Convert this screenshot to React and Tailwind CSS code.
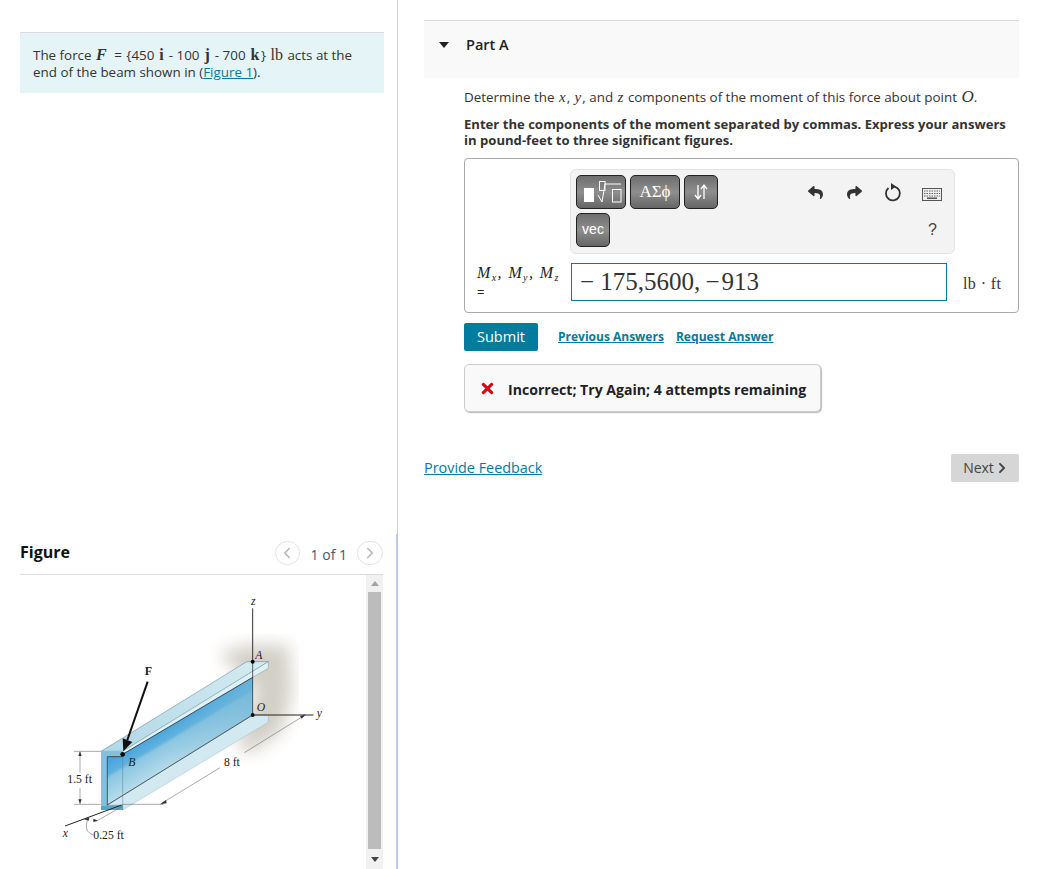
import { FaReply, FaShare, FaTimes, FaChevronRight } from "react-icons/fa";
import { ChevronLeft, ChevronRight } from "lucide-react";

const Serif = ({ children, className = "" }) => (
    <span className={"font-['Liberation_Serif',serif] " + className}>{children}</span>
);

const MathVar = ({ children }) => <Serif className="italic text-[15px] mx-[1px]">{children}</Serif>;

const Bold = ({ children }) => <Serif className="font-bold text-[16px] mx-[1.5px]">{children}</Serif>;

const ToolBtn = ({ children, className = "" }) => (
    <div className={"h-[34px] flex items-center justify-center rounded-[5px] border border-[#222] bg-gradient-to-b from-[#6e6e6e] via-[#8e8e8e] to-[#666] text-white " + className}>
        {children}
    </div>
);

const Beam = () => (
    <svg width="290" height="270" viewBox="0 0 870 810" className="block">
        <defs>
            <filter id="blur1"><feGaussianBlur stdDeviation="26" /></filter>
            <linearGradient id="web" gradientUnits="userSpaceOnUse" x1="350" y1="415" x2="403" y2="504">
                <stop offset="0" stopColor="#4aa6dc" />
                <stop offset="0.28" stopColor="#5fb1de" />
                <stop offset="0.38" stopColor="#8cc6e2" />
                <stop offset="1" stopColor="#b5dbea" />
            </linearGradient>
            <linearGradient id="webShade" gradientUnits="userSpaceOnUse" x1="350" y1="0" x2="608" y2="0">
                <stop offset="0" stopColor="#6fb5d8" stopOpacity="0" />
                <stop offset="1" stopColor="#6fb5d8" stopOpacity="0.7" />
            </linearGradient>
            <linearGradient id="flange" x1="0" y1="1" x2="1" y2="0">
                <stop offset="0" stopColor="#b0d8e6" />
                <stop offset="1" stopColor="#d5ebf2" />
            </linearGradient>
        </defs>
        <path d="M505 190 L600 165 L715 165 L725 300 L700 420 L600 490 L560 470 L620 300 Z" fill="#d2cfc5" filter="url(#blur1)" />
        <polygon points="153,484 590,215 655,215 218,484" fill="url(#flange)" stroke="#56788a" strokeWidth="1.5" />
        <polygon points="218,484 655,215 655,235 608,262 218,493" fill="#dff0f6" stroke="#56788a" strokeWidth="1" />
        <polygon points="218,493 608,262 608,375 172,645 172,500" fill="url(#web)" />
        <polygon points="218,493 608,262 608,375 172,645 172,500" fill="url(#webShade)" />
        <polygon points="172,645 608,375 655,375 655,397 218,660 218,645" fill="#d3e9f2" stroke="#7fa3b3" strokeWidth="1" />
        <polygon points="153,484 218,484 218,500 172,500 172,645 218,645 218,660 153,660" fill="#82c0dc" />
        <polygon points="153,648 218,645 218,660 153,660" fill="#5aa6c4" />
        <polyline points="218,500 172,500 172,645 608,375 608,215" fill="none" stroke="#1a1a1a" strokeWidth="2" />
        <line x1="218" y1="493" x2="608" y2="262" stroke="#1a1a1a" strokeWidth="2" />
        <line x1="218" y1="493" x2="218" y2="660" stroke="#5a8296" strokeWidth="1.5" />
        <line x1="608" y1="55" x2="608" y2="215" stroke="#333" strokeWidth="3" />
        <line x1="608" y1="375" x2="790" y2="375" stroke="#222" strokeWidth="3" />
        <line x1="45" y1="708" x2="215" y2="645" stroke="#222" strokeWidth="3" />
        <line x1="293" y1="275" x2="232" y2="450" stroke="#111" strokeWidth="6" />
        <polygon points="220,484 218,445 247,456" fill="#111" />
        <circle cx="218" cy="493" r="7" fill="#000" />
        <circle cx="608" cy="215" r="6" fill="#000" />
        <circle cx="608" cy="375" r="6" fill="#000" />
        <g stroke="#555" strokeWidth="1.5" fill="none">
            <line x1="72" y1="484" x2="153" y2="484" />
            <line x1="72" y1="643" x2="153" y2="643" />
            <line x1="90" y1="486" x2="90" y2="548" />
            <line x1="90" y1="595" x2="90" y2="641" />
            <line x1="218" y1="643" x2="340" y2="643" />
            <line x1="335" y1="640" x2="510" y2="533" />
            <line x1="583" y1="488" x2="765" y2="375" />
            <line x1="145" y1="690" x2="215" y2="650" />
            <path d="M130 735 C108 728 106 710 112 692" />
        </g>
        <g fill="#333">
            <polygon points="90,484 85,498 95,498" />
            <polygon points="90,642 85,628 95,628" />
            <polygon points="330,643 348,630 350,640" />
            <polygon points="768,373 750,378 755,386" />
            <polygon points="102,688 118,682 116,692" />
            <polygon points="145,692 130,686 130,696" />
        </g>
        <g fontFamily="'Liberation Serif', serif" fontSize="35" fill="#222">
            <text x="284" y="256" fontWeight="700" fontSize="36">F</text>
            <text x="235" y="528" fontStyle="italic">B</text>
            <text x="616" y="206" fontStyle="italic">A</text>
            <text x="620" y="362" fontStyle="italic">O</text>
            <text x="603" y="46" fontStyle="italic">z</text>
            <text x="800" y="380" fontStyle="italic">y</text>
            <text x="38" y="740" fontStyle="italic">x</text>
            <text x="522" y="528">8 ft</text>
            <text x="52" y="578">1.5 ft</text>
            <text x="130" y="746">0.25 ft</text>
        </g>
    </svg>
);

const App = () => {
    return (
        <div className="w-[1058px] h-[869px] flex overflow-hidden bg-white text-[#333] font-['Open_Sans',sans-serif] text-[13.4px]">
            {/* left column */}
            <div className="w-[398px] shrink-0 flex flex-col">
                <div className="h-[534px] pt-[32px] pl-[20px] pr-[13px] border-r border-[#cfcfcf] mr-[0.5px]">
                    <div className="h-[61px] bg-[#e5f5f7] border-t border-[#dcdcdc] px-[13px] pt-[13px] leading-[17px] whitespace-nowrap">
                        The force <Serif className="italic font-bold text-[16px] mx-[1px]">F</Serif>
                        {" "}<span className="ml-[3px] mr-[1px]">=</span> {"{"}450 <Bold>i</Bold> - 100 <Bold>j</Bold> - 700 <Bold>k</Bold>{"}"} <Serif className="text-[16px] mx-[1px]">lb</Serif> acts at the
                        <br />
                        end of the beam shown in (<a className="text-[#007c9e] underline">Figure 1</a>).
                    </div>
                </div>
                <div className="h-[335px] border-r-2 border-[#b8cde2] pl-[20px] pr-[13px] flex flex-col">
                    <div className="h-[41px] shrink-0 flex items-center justify-between border-b border-[#dcdcdc] pb-[2px]">
                        <div className="text-[16px] font-bold text-[#111] mb-[2px]">Figure</div>
                        <div className="flex items-center text-[14px] text-[#44586b]">
                            <div className="w-[25px] h-[24px] rounded-full border border-[#e4e4e4] flex items-center justify-center text-[#b8b8b8]"><ChevronLeft size={18} strokeWidth={2.2} /></div>
                            <span className="ml-[11px] mr-[10px] mt-[2px]">1 of 1</span>
                            <div className="w-[26px] h-[24px] rounded-full border border-[#e4e4e4] flex items-center justify-center text-[#b8b8b8]"><ChevronRight size={18} strokeWidth={2.2} /></div>
                        </div>
                    </div>
                    <div className="flex flex-1 min-h-0">
                        <div className="flex-1 pl-[30px] pt-[15px]"><Beam /></div>
                        <div className="w-[17px] bg-[#f1f1f1] flex flex-col items-center">
                            <div className="h-[17px] flex items-center justify-center">
                                <div className="w-0 h-0 border-x-[4px] border-x-transparent border-b-[5px] border-b-[#a3a3a3]" />
                            </div>
                            <div className="flex-1 w-[13px] bg-[#bcbcbc]" />
                            <div className="h-[20px] flex items-center justify-center">
                                <div className="w-0 h-0 border-x-[4px] border-x-transparent border-t-[5px] border-t-[#444]" />
                            </div>
                        </div>
                    </div>
                </div>
            </div>

            {/* right column */}
            <div className="w-[595px] ml-[26px] pt-[20px]">
                <div className="h-[58px] bg-[#f9f9f9] border-t border-[#dcdcdc] flex pt-[14px]">
                    <div className="ml-[15px] mt-[7px] w-0 h-0 border-x-[5px] border-x-transparent border-t-[6px] border-t-[#222]" />
                    <div className="ml-[17px] text-[14.5px] font-semibold text-[#222] leading-[20px]">Part A</div>
                </div>
                <div className="pl-[40px]">
                    <div className="mt-[9px] leading-[19px]">
                        Determine the <MathVar>x</MathVar>, <MathVar>y</MathVar>, and <MathVar>z</MathVar> components of the moment of this force about point <Serif className="italic text-[17px] ml-[1px]">O</Serif>.
                    </div>
                    <div className="mt-[9px] font-bold text-[13.1px] leading-[16px] text-[#333]">
                        Enter the components of the moment separated by commas. Express your answers<br />in pound-feet to three significant figures.
                    </div>
                    <div className="mt-[10px] h-[155px] border border-[#aaa] rounded-[4px] pt-[10px]">
                        <div className="ml-[105px] w-[385px] h-[85px] bg-[#f3f3f3] border border-[#e2e2e2] rounded-[6px] pl-[5px] pr-[12px] pt-[5px]">
                            <div className="flex justify-between">
                                <div className="flex gap-[4px]">
                                    <ToolBtn className="w-[50px]">
                                        <svg width="48" height="32" viewBox="0 0 48 32">
                                            <rect x="7" y="12" width="10" height="14" fill="#fff" />
                                            <rect x="22.5" y="5.5" width="5.5" height="9" fill="none" stroke="#fff" />
                                            <path d="M21 19 L25 26 L28 8 L44 8" fill="none" stroke="#fff" />
                                            <rect x="35.5" y="13.5" width="8.5" height="12.5" fill="none" stroke="#fff" />
                                        </svg>
                                    </ToolBtn>
                                    <ToolBtn className="w-[50px] font-['Liberation_Serif',serif] text-[17px]">ΑΣϕ</ToolBtn>
                                    <ToolBtn className="w-[34px]">
                                        <svg width="16" height="18" viewBox="0 0 16 18" fill="none" stroke="#fff" strokeWidth="1.3">
                                            <path d="M5 2 V15 M2 12 L5 16 L8 12" />
                                            <path d="M11 16 V3 M8 6 L11 2 L14 6" />
                                        </svg>
                                    </ToolBtn>
                                </div>
                                <div className="flex items-center text-[#333]">
                                    <FaReply className="w-[15px] h-[15px] mr-[24px]" />
                                    <FaShare className="w-[15px] h-[15px] mr-[22px]" />
                                    <svg width="18" height="19" viewBox="0 0 18 19" fill="none" className="mr-[20px]">
                                        <path d="M10.5 3.6 A7 7 0 1 1 4.5 5" stroke="#333" strokeWidth="1.8" />
                                        <polygon points="7,0 12,3.6 7,7" fill="#333" />
                                    </svg>
                                    <svg width="20" height="13" viewBox="0 0 20 13" className="mt-[5px]">
                                        <rect x="0.5" y="0.5" width="19" height="12" fill="#eee" stroke="#555" />
                                        <path d="M2 3 H18 M2 5.5 H18 M2 8 H18" stroke="#666" strokeDasharray="1.5 1" />
                                        <rect x="5" y="9.5" width="10" height="1.5" fill="#555" />
                                    </svg>
                                </div>
                            </div>
                            <div className="flex justify-between mt-[4px]">
                                <ToolBtn className="w-[34px] font-['Liberation_Sans',sans-serif] text-[14px] pb-[2px]">vec</ToolBtn>
                                <div className="font-['Liberation_Sans',sans-serif] text-[16px] text-[#444] flex items-center mr-[5px]">?</div>
                            </div>
                        </div>
                        <div className="flex mt-[9px]">
                            <div className="w-[106px] pl-[12px] pt-[1px] shrink-0 text-[#222] leading-[17px]">
                                <div className="whitespace-nowrap">
                                    <Serif className="italic text-[16px] tracking-[1.4px]">M<sub className="text-[10px]">x</sub>, M<sub className="text-[10px]">y</sub>, M<sub className="text-[10px]">z</sub></Serif>
                                </div>
                                <div className="text-[13px] mt-[2px]">=</div>
                            </div>
                            <div className="w-[376px] h-[38px] border border-[#007c9e] flex items-center pl-[8px] font-['Liberation_Serif',serif] text-[25px] text-[#333] whitespace-pre">
                                − 175,5600,{"\u2009"}−{"\u200a"}913
                            </div>
                            <Serif className="ml-[16px] mt-[9px] text-[16px] tracking-[0.4px] text-[#333]">lb · ft</Serif>
                        </div>
                    </div>
                    <div className="flex items-center mt-[10px]">
                        <div className="w-[74px] h-[28px] bg-[#007c9e] rounded-[2px] text-[14.5px] text-white flex items-center justify-center">Submit</div>
                        <a className="ml-[20px] text-[12px] font-bold text-[#007c9e] underline">Previous Answers</a>
                        <a className="ml-[12px] text-[12.1px] font-bold text-[#007c9e] underline">Request Answer</a>
                    </div>
                    <div className="mt-[13px] w-[357px] h-[48px] bg-[#f9f9f9] border border-[#ccc] rounded-[5px] shadow-[1px_1px_1px_#bbb] flex items-center pl-[14px]">
                        <FaTimes className="text-[#e0001b] w-[17px] h-[17px]" />
                        <span className="ml-[12px] pt-[3px] font-bold text-[14.1px] text-[#222]">Incorrect; Try Again; 4 attempts remaining</span>
                    </div>
                </div>
                <div className="mt-[42px] flex items-center justify-between">
                    <a className="text-[14.4px] text-[#007c9e] underline">Provide Feedback</a>
                    <div className="w-[68px] h-[28px] bg-[#d6d6d6] rounded-[2px] text-[14px] pb-[1px] flex items-center justify-center text-[#444]">
                        Next<FaChevronRight className="w-[10px] h-[12px] ml-[3px]" />
                    </div>
                </div>
            </div>
        </div>
    );
};

export default App;
